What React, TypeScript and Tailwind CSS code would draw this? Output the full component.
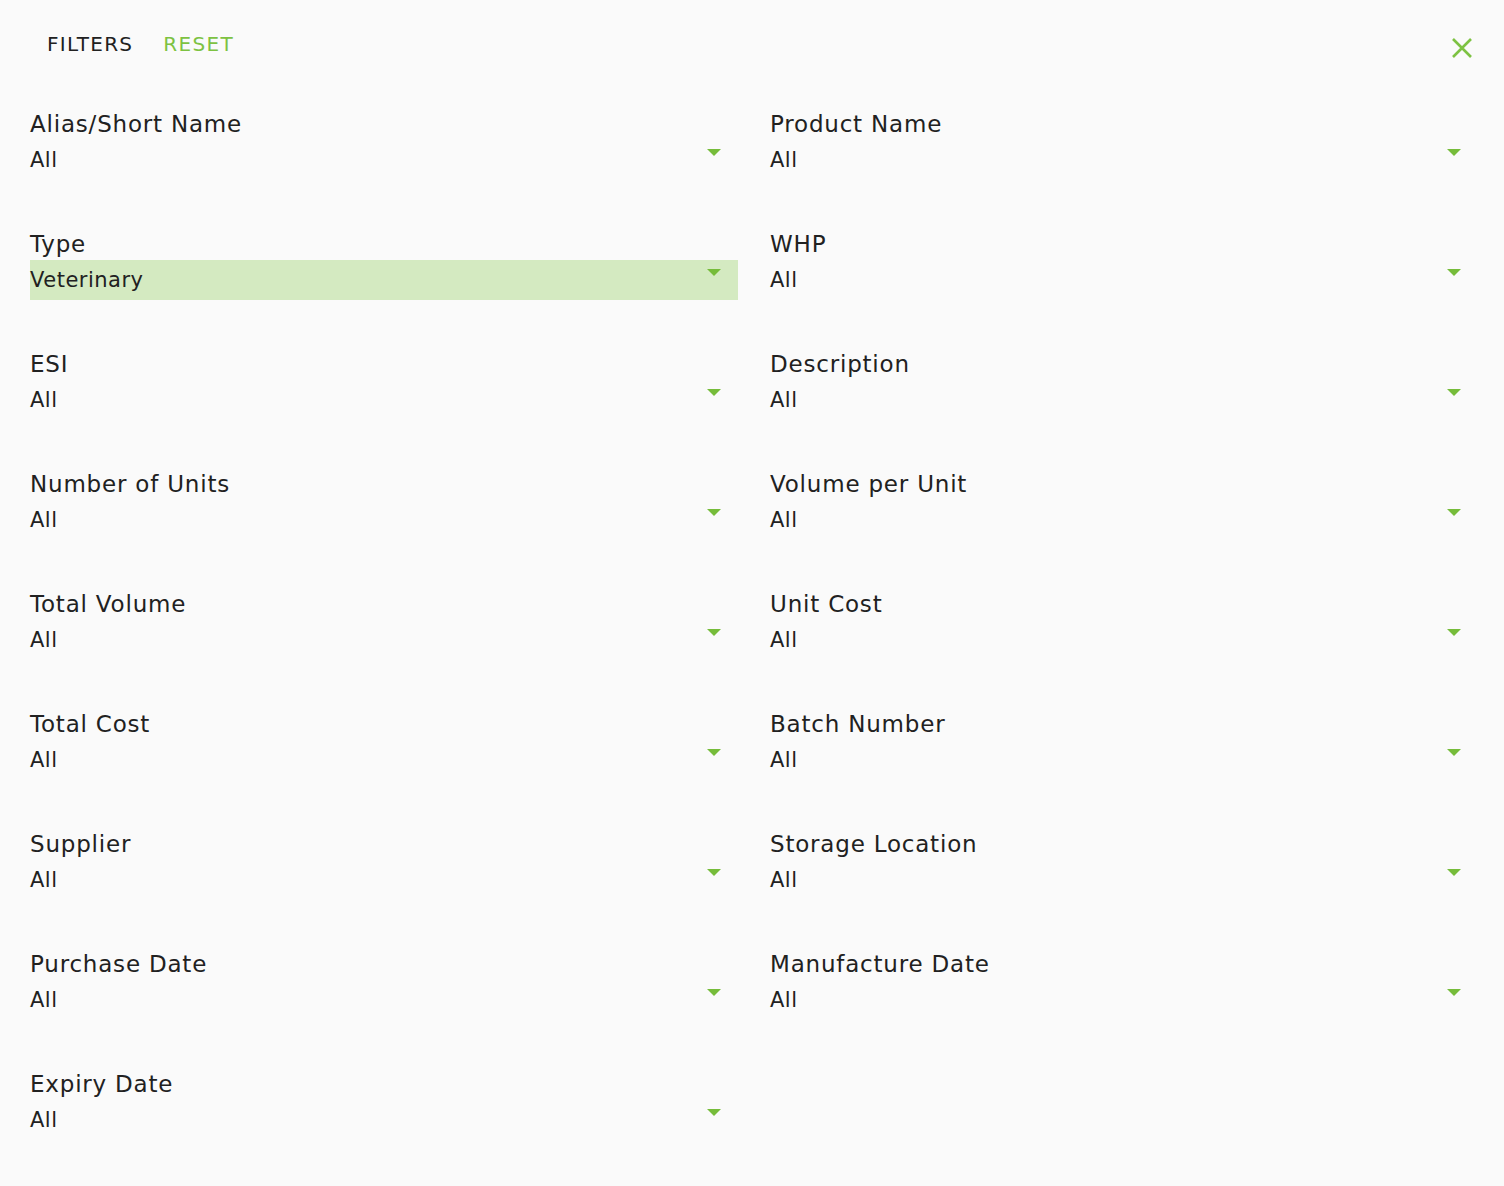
import React from "react";

const fields: { label: string; value: string; active?: boolean }[] = [
  { label: "Alias/Short Name", value: "All" },
  { label: "Product Name", value: "All" },
  { label: "Type", value: "Veterinary", active: true },
  { label: "WHP", value: "All" },
  { label: "ESI", value: "All" },
  { label: "Description", value: "All" },
  { label: "Number of Units", value: "All" },
  { label: "Volume per Unit", value: "All" },
  { label: "Total Volume", value: "All" },
  { label: "Unit Cost", value: "All" },
  { label: "Total Cost", value: "All" },
  { label: "Batch Number", value: "All" },
  { label: "Supplier", value: "All" },
  { label: "Storage Location", value: "All" },
  { label: "Purchase Date", value: "All" },
  { label: "Manufacture Date", value: "All" },
  { label: "Expiry Date", value: "All" },
];

function FilterSelect({ label, value, active }: { label: string; value: string; active?: boolean }) {
  return (
    <div className="flex flex-col">
      <label className="h-8 leading-8 text-[23px] tracking-[0.8px] text-[#212121]">{label}</label>
      <div className={`relative h-10 flex items-center ${active ? "bg-[#d4eac1]" : ""}`}>
        <span className="text-[21px] tracking-[0.5px] text-[#212121] mt-[1px]">{value}</span>
        <span className="absolute right-[17px] top-[9px] w-0 h-0 border-l-[7px] border-r-[7px] border-t-[7px] border-l-transparent border-r-transparent border-t-[#76bc3a]" />
      </div>
    </div>
  );
}

export default function App() {
  return (
    <div className="min-h-screen bg-[#fafafa] font-['DejaVu_Sans',sans-serif]">
      <header className="flex items-center justify-between pl-[47px] pr-[32px] pt-[30px]">
        <div className="flex items-center gap-[30px] text-[20px] tracking-[1.3px] h-7">
          <span className="text-[#212121]">FILTERS</span>
          <button className="text-[#7dc242] tracking-[1.3px]">RESET</button>
        </div>
        <button className="text-[#7dc242] mt-[8px]">
          <svg width="20" height="20" viewBox="0 0 20 20" stroke="currentColor" strokeWidth="2.6" fill="none">
            <path d="M1 1L19 19M19 1L1 19" />
          </svg>
        </button>
      </header>
      <section className="grid grid-cols-2 gap-x-8 gap-y-12 pl-[30px] pr-[26px] pt-[50px] pb-10">
        {fields.map((f) => (
          <FilterSelect key={f.label} {...f} />
        ))}
      </section>
    </div>
  );
}
